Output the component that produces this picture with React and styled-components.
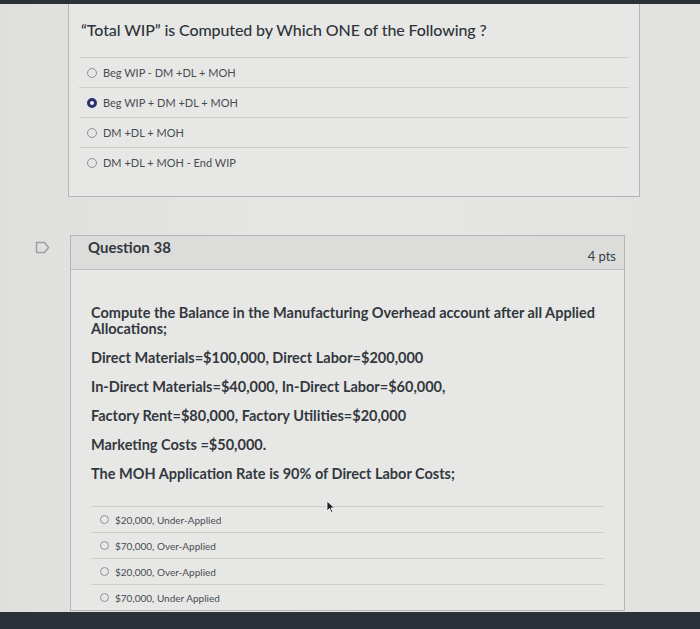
import React from 'react';
import styled, { createGlobalStyle } from 'styled-components';

const GlobalStyle = createGlobalStyle`
  html, body {
    margin: 0;
    padding: 0;
    background: #e3e4e2;
    font-family: Lato, "Open Sans", Arial, sans-serif;
    color: #3b4046;
  }
`;

const Page = styled.div`
  width: 700px;
  height: 629px;
  display: flex;
  flex-direction: column;
  overflow: hidden;
  position: relative;
  background: linear-gradient(90deg, #dfe0de 0%, #e6e7e5 45%, #e2e3e1 100%);
`;

const TopBar = styled.div`
  height: 4px;
  background: #2c3137;
  flex-shrink: 0;
`;

const Main = styled.div`
  flex: 1;
  display: flex;
  flex-direction: column;
`;

const Card = styled.div`
  margin-left: ${(p) => p.$left}px;
  width: ${(p) => p.$width}px;
  border: 1px solid #b4b6b5;
  border-top: ${(p) => (p.$open ? 'none' : '1px solid #b4b6b5')};
  background: #e7e8e6;
  box-sizing: border-box;
`;

const Title = styled.div`
  font-size: 16px;
  font-weight: 500;
  padding: 16px 0 0 12px;
  height: 37px;
  color: #2f343a;
  letter-spacing: -0.1px;
`;

const OptionList = styled.div`
  margin: 0 10px 19px 10px;
  display: flex;
  flex-direction: column;
`;

const Option = styled.div`
  height: ${(p) => p.$h}px;
  border-top: 1px solid #cdcfcd;
  display: flex;
  align-items: center;
  gap: ${(p) => p.$gap}px;
  padding-left: ${(p) => p.$pad}px;
  font-size: ${(p) => p.$size}px;
  color: #474c52;
  box-sizing: border-box;
`;

const Radio = styled.span`
  width: ${(p) => p.$d}px;
  height: ${(p) => p.$d}px;
  border-radius: 50%;
  box-sizing: border-box;
  border: ${(p) => (p.$checked ? `3px solid #2b2f6e` : '1px solid #8e9193')};
  background: ${(p) => (p.$checked ? '#f2f2f2' : 'transparent')};
  flex-shrink: 0;
`;

const QuestionRow = styled.div`
  display: flex;
  margin-top: 38px;
  margin-left: 35px;
`;

const FlagCol = styled.div`
  width: 35px;
  padding-top: 3px;
  flex-shrink: 0;
`;

const Header = styled.div`
  height: 34px;
  background: #dcdddb;
  border-bottom: 1px solid #bfc1c0;
  display: flex;
  justify-content: space-between;
  padding: 0 8px 0 17px;
  box-sizing: border-box;
`;

const QTitle = styled.div`
  font-size: 15px;
  font-weight: 700;
  padding-top: 2px;
  color: #33383e;
`;

const Points = styled.div`
  font-size: 13px;
  padding-top: 12px;
  color: #3b4046;
`;

const Body = styled.div`
  padding: 35px 20px 0 20px;
`;

const Para = styled.p`
  margin: 0 0 13px 0;
  font-size: 14.5px;
  font-weight: 700;
  line-height: 16px;
  color: #33383e;
`;

const Answers = styled.div`
  margin: 24px 0 0 0;
  display: flex;
  flex-direction: column;
`;

const BottomBar = styled.div`
  position: absolute;
  left: 0;
  right: 0;
  bottom: 0;
  height: 17px;
  background: #2b3139;
`;

const Cursor = styled.svg`
  position: absolute;
  left: 326px;
  top: 500px;
`;

const wipOptions = [
  { text: 'Beg WIP - DM +DL + MOH' },
  { text: 'Beg WIP + DM +DL + MOH', checked: true },
  { text: 'DM +DL + MOH' },
  { text: 'DM +DL + MOH - End WIP' },
];

const mohOptions = [
  '$20,000, Under-Applied',
  '$70,000, Over-Applied',
  '$20,000, Over-Applied',
  '$70,000, Under Applied',
];

const paragraphs = [
  'Compute the Balance in the Manufacturing Overhead account after all Applied Allocations;',
  'Direct Materials=$100,000, Direct Labor=$200,000',
  'In-Direct Materials=$40,000, In-Direct Labor=$60,000,',
  'Factory Rent=$80,000, Factory Utilities=$20,000',
  'Marketing Costs =$50,000.',
  'The MOH Application Rate is 90% of Direct Labor Costs;',
];

const Flag = () => (
  <svg width="15" height="13" viewBox="0 0 15 13">
    <path d="M1.5 1.5 H9.5 L13.5 6.5 L9.5 11.5 H1.5 Z" fill="none" stroke="#9c9e9f" strokeWidth="1.5" strokeLinejoin="round" />
  </svg>
);

const App = () => (
  <>
    <GlobalStyle />
    <Page>
      <TopBar />
      <Main>
        <Card $left={68} $width={572} $open>
          <Title>“Total WIP” is Computed by Which ONE of the Following ?</Title>
          <OptionList>
            {wipOptions.map((o) => (
              <Option key={o.text} $h={30} $gap={6} $pad={8} $size={11}>
                <Radio $d={10} $checked={o.checked} />
                {o.text}
              </Option>
            ))}
          </OptionList>
        </Card>

        <QuestionRow>
          <FlagCol>
            <Flag />
          </FlagCol>
          <Card $left={0} $width={555}>
            <Header>
              <QTitle>Question 38</QTitle>
              <Points>4 pts</Points>
            </Header>
            <Body>
              {paragraphs.map((t) => (
                <Para key={t}>{t}</Para>
              ))}
              <Answers>
                {mohOptions.map((t) => (
                  <Option key={t} $h={26} $gap={6} $pad={9} $size={10}>
                    <Radio $d={9} />
                    {t}
                  </Option>
                ))}
              </Answers>
            </Body>
          </Card>
        </QuestionRow>
      </Main>
      <Cursor width="10" height="14" viewBox="0 0 10 14">
        <path d="M1 1 L1 11 L3.5 8.5 L5.5 13 L7 12.3 L5 8 L8.5 8 Z" fill="#222" stroke="#fff" strokeWidth="0.8" />
      </Cursor>
      <BottomBar />
    </Page>
  </>
);

export default App;
